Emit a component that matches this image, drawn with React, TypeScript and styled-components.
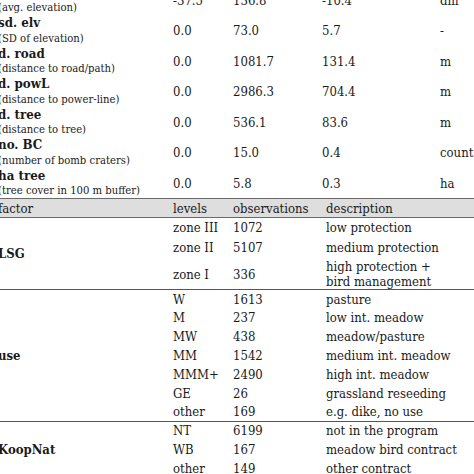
import React from "react"
import styled, { createGlobalStyle } from "styled-components"

const GlobalStyle = createGlobalStyle`
  html, body {
    margin: 0;
    padding: 0;
    background: #ffffff;
    overflow: hidden;
  }
  body {
    font-family: "DejaVu Serif Condensed", "Liberation Serif", serif;
    color: #1a1a1a;
  }
`

const Page = styled.div`
  width: 520px;
  margin: -15.25px 0 0 -2px;
`

const Table = styled.table`
  border-collapse: collapse;
  table-layout: fixed;
  width: 520px;
`

const Col = styled.col<{ $w: number }>`
  width: ${(p) => p.$w}px;
`

const StatRow = styled.tr`
  height: 30.5px;
`

const NameCell = styled.td`
  padding: 0;
  vertical-align: top;
  white-space: nowrap;
`

const Name = styled.div`
  font-weight: bold;
  font-size: 13.2px;
  line-height: 15.5px;
`

const Desc = styled.div`
  font-size: 11.2px;
  line-height: 15px;
`

const Cell = styled.td`
  padding: 0;
  font-size: 13px;
  line-height: 15px;
  vertical-align: middle;
  white-space: nowrap;
`

const HeadRow = styled.tr`
  background: #dedede;
  border-top: 1.5px solid #6a6a6a;
  border-bottom: 1.5px solid #6a6a6a;
`

const HeadCell = styled.th`
  padding: 1px 0 0 0;
  font-weight: normal;
  font-size: 13px;
  line-height: 17px;
  text-align: left;
  white-space: nowrap;
`

const Row = styled.tr<{ $h: number; $end?: boolean }>`
  height: ${(p) => p.$h}px;
  border-bottom: ${(p) => (p.$end ? "1.5px solid #555555" : "none")};
`

const GroupCell = styled.td`
  padding: 0;
  font-weight: bold;
  font-size: 13px;
  vertical-align: middle;
`

type Stat = { name: string; desc: string; min: string; max: string; mean: string; unit: string }

const stats: Stat[] = [
  { name: "elv", desc: "(avg. elevation)", min: "-37.5", max: "136.8", mean: "-10.4", unit: "dm" },
  { name: "sd. elv", desc: "(SD of elevation)", min: "0.0", max: "73.0", mean: "5.7", unit: "-" },
  { name: "d. road", desc: "(distance to road/path)", min: "0.0", max: "1081.7", mean: "131.4", unit: "m" },
  { name: "d. powL", desc: "(distance to power-line)", min: "0.0", max: "2986.3", mean: "704.4", unit: "m" },
  { name: "d. tree", desc: "(distance to tree)", min: "0.0", max: "536.1", mean: "83.6", unit: "m" },
  { name: "no. BC", desc: "(number of bomb craters)", min: "0.0", max: "15.0", mean: "0.4", unit: "count" },
  { name: "ha tree", desc: "(tree cover in 100 m buffer)", min: "0.0", max: "5.8", mean: "0.3", unit: "ha" },
]

type Level = { level: string; obs: string; desc: string[]; h: number }
type Factor = { name: string; levels: Level[] }

const factors: Factor[] = [
  {
    name: "LSG",
    levels: [
      { level: "zone III", obs: "1072", desc: ["low protection"], h: 19 },
      { level: "zone II", obs: "5107", desc: ["medium protection"], h: 22 },
      { level: "zone I", obs: "336", desc: ["high protection +", "bird management"], h: 31 },
    ],
  },
  {
    name: "use",
    levels: [
      { level: "W", obs: "1613", desc: ["pasture"], h: 18.8 },
      { level: "M", obs: "237", desc: ["low int. meadow"], h: 18.8 },
      { level: "MW", obs: "438", desc: ["meadow/pasture"], h: 18.8 },
      { level: "MM", obs: "1542", desc: ["medium int. meadow"], h: 18.8 },
      { level: "MMM+", obs: "2490", desc: ["high int. meadow"], h: 18.8 },
      { level: "GE", obs: "26", desc: ["grassland reseeding"], h: 18.8 },
      { level: "other", obs: "169", desc: ["e.g. dike, no use"], h: 18.8 },
    ],
  },
  {
    name: "KoopNat",
    levels: [
      { level: "NT", obs: "6199", desc: ["not in the program"], h: 18.8 },
      { level: "WB", obs: "167", desc: ["meadow bird contract"], h: 18.8 },
      { level: "other", obs: "149", desc: ["other contract"], h: 18.8 },
    ],
  },
]

const App: React.FC = () => {
  return (
    <Page>
      <GlobalStyle />
      <Table>
        <colgroup>
          <Col $w={175} />
          <Col $w={60} />
          <Col $w={89} />
          <Col $w={118} />
          <Col $w={78} />
        </colgroup>
        <tbody>
          {stats.map((s) => (
            <StatRow key={s.desc}>
              <NameCell>
                <Name>{s.name}</Name>
                <Desc>{s.desc}</Desc>
              </NameCell>
              <Cell>{s.min}</Cell>
              <Cell>{s.max}</Cell>
              <Cell>{s.mean}</Cell>
              <Cell>{s.unit}</Cell>
            </StatRow>
          ))}
        </tbody>
      </Table>

      <Table>
        <colgroup>
          <Col $w={175} />
          <Col $w={60} />
          <Col $w={93} />
          <Col $w={192} />
        </colgroup>
        <thead>
          <HeadRow>
            <HeadCell>factor</HeadCell>
            <HeadCell>levels</HeadCell>
            <HeadCell>observations</HeadCell>
            <HeadCell>description</HeadCell>
          </HeadRow>
        </thead>
        <tbody>
          {factors.map((f) =>
            f.levels.map((l, i) => (
              <Row key={f.name + l.level} $h={l.h} $end={i === f.levels.length - 1}>
                {i === 0 && <GroupCell rowSpan={f.levels.length}>{f.name}</GroupCell>}
                <Cell>{l.level}</Cell>
                <Cell>{l.obs}</Cell>
                <Cell>
                  {l.desc.map((d) => (
                    <div key={d}>{d}</div>
                  ))}
                </Cell>
              </Row>
            ))
          )}
        </tbody>
      </Table>
    </Page>
  )
}

export default App
